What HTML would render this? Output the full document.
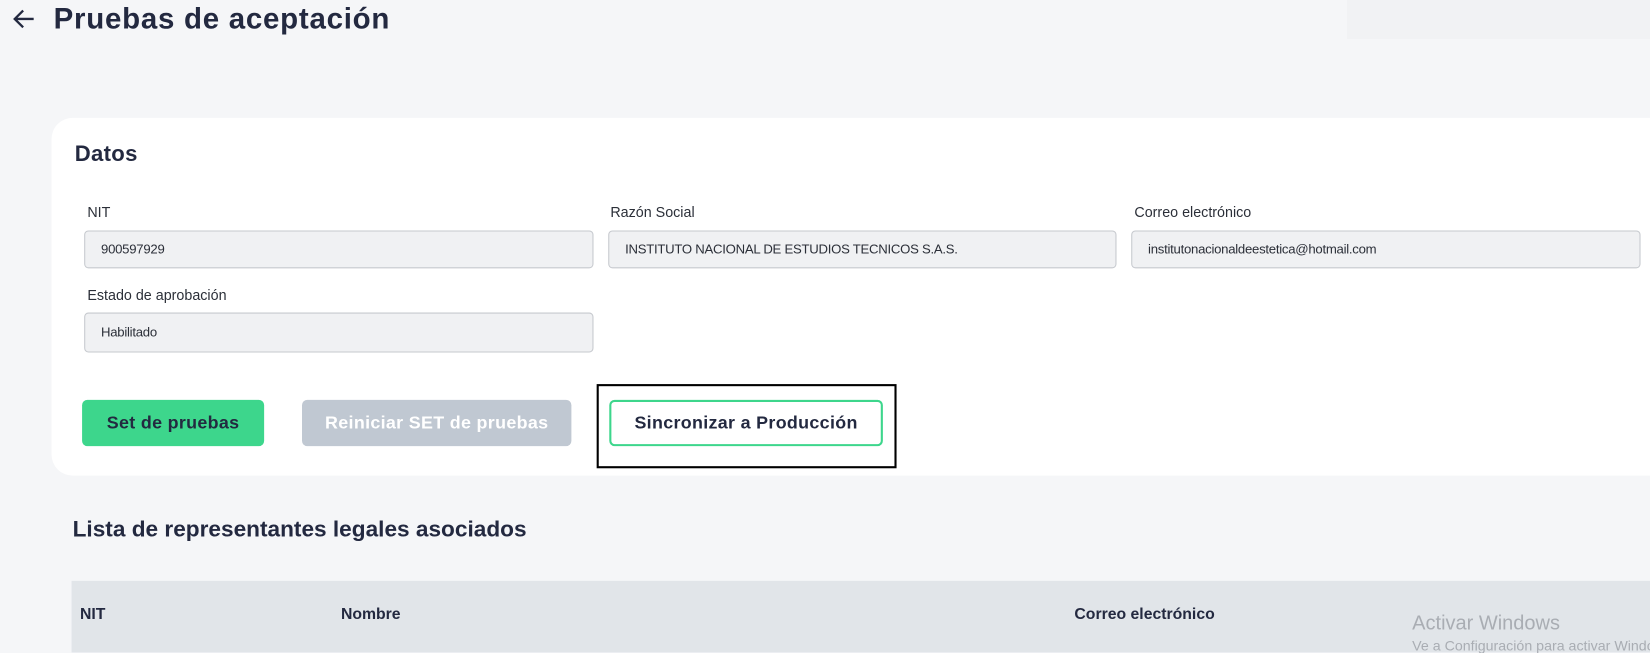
<!DOCTYPE html>
<html><head><meta charset="utf-8"><style>
html,body{margin:0;padding:0;width:1650px;height:652px;overflow:hidden;background:#f5f6f8;}
#w{position:absolute;left:0;top:0;width:1568px;height:620px;transform:scale(1.0523);transform-origin:0 0;font-family:"Liberation Sans",sans-serif;color:#232940;}
.a{position:absolute;}
.lbl{position:absolute;font-size:13.6px;color:#2b2f38;}
.inp{position:absolute;height:36px;background:#f0f1f3;border:1px solid #c6c9ce;border-radius:4px;box-sizing:border-box;font-size:12.5px;letter-spacing:-0.25px;color:#2b2f38;line-height:34px;padding-left:15px;}
.btn{position:absolute;height:44px;border-radius:5px;box-sizing:border-box;font-weight:bold;font-size:17px;letter-spacing:0.3px;text-align:center;line-height:44px;}
.th{position:absolute;top:575px;font-weight:bold;font-size:15px;color:#232940;}
</style></head><body><div id="w">
<div class="a" style="left:1280px;top:0;width:288px;height:37px;background:#f1f2f4"></div>
<svg class="a" style="left:11px;top:7px" width="24" height="22" viewBox="0 0 24 22"><path d="M21 11H3M11 3L3 11L11 19" fill="none" stroke="#232940" stroke-width="2.2"/></svg>
<div class="a" style="left:51px;top:2px;font-size:28px;font-weight:bold;letter-spacing:0.7px">Pruebas de aceptación</div>
<div class="a" style="left:49px;top:112px;width:1540px;height:340px;background:#fff;border-radius:20px;"></div>
<div class="a" style="left:71px;top:135px;font-size:21px;font-weight:bold;letter-spacing:0.3px">Datos</div>
<div class="lbl" style="left:83px;top:194px">NIT</div>
<div class="inp" style="left:80px;top:219px;width:484px">900597929</div>
<div class="lbl" style="left:580px;top:194px">Razón Social</div>
<div class="inp" style="left:578px;top:219px;width:483px">INSTITUTO NACIONAL DE ESTUDIOS TECNICOS S.A.S.</div>
<div class="lbl" style="left:1078px;top:194px">Correo electrónico</div>
<div class="inp" style="left:1075px;top:219px;width:484px">institutonacionaldeestetica@hotmail.com</div>
<div class="lbl" style="left:83px;top:273px">Estado de aprobación</div>
<div class="inp" style="left:80px;top:297px;width:484px;height:38px;line-height:36px">Habilitado</div>
<div class="btn" style="left:78px;top:380px;width:173px;background:#3dd68c;color:#232940">Set de pruebas</div>
<div class="btn" style="left:287px;top:380px;width:256px;background:#c0c8d2;color:#fff">Reiniciar SET de pruebas</div>
<div class="a" style="left:567px;top:365px;width:285px;height:80px;border:2px solid #000;box-sizing:border-box"></div>
<div class="btn" style="left:579px;top:380px;width:260px;border:2px solid #3dd68c;background:#fff;color:#232940;line-height:40px">Sincronizar a Producción</div>
<div class="a" style="left:69px;top:491px;font-size:21.5px;font-weight:bold;">Lista de representantes legales asociados</div>
<div class="a" style="left:68px;top:552px;width:1500px;height:68px;background:#e1e5e9"></div>
<div class="th" style="left:76px">NIT</div>
<div class="th" style="left:324px">Nombre</div>
<div class="th" style="left:1021px">Correo electrónico</div>
<div class="a" style="left:1342px;top:582px;font-size:19px;color:#a9adb3;">Activar Windows</div>
<div class="a" style="left:1342px;top:606px;font-size:13.5px;color:#a9adb3;white-space:nowrap">Ve a Configuración para activar Windows.</div>
</div></body></html>
